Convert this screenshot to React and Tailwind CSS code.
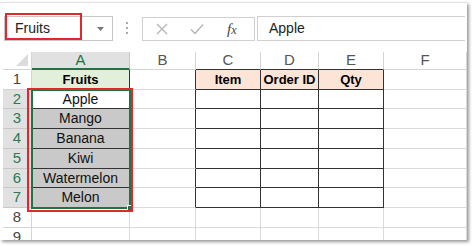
import React from "react";

const font = { fontFamily: '"Liberation Sans", Arial, sans-serif' };

const letters = ["", "A", "B", "C", "D", "E", "F"];
const fruits = ["Fruits", "Apple", "Mango", "Banana", "Kiwi", "Watermelon", "Melon"];
const tableHead = { 3: "Item", 4: "Order ID", 5: "Qty" };

// class list for one grid cell, r = 0 is the column header row, c = 0 is the row header column
const cellClass = (r, c) => {
  const base = "flex items-center justify-center border-r border-b overflow-hidden whitespace-nowrap";
  if (r === 0) {
    if (c === 0) return `${base} relative bg-white border-r-[#d4d4d4] border-b-[#d4d4d4]`;
    if (c === 1) return `${base} bg-[#e1e1e1] text-[#217346] border-r-[#c8c8c8] border-b-2 border-b-[#217346] text-[15px]`;
    if (c >= 3 && c <= 5) return `${base} bg-white text-[#555] border-r-[#d4d4d4] border-b-[#333] text-[15px]`;
    return `${base} bg-white text-[#555] border-r-[#d4d4d4] border-b-[#d4d4d4] text-[15px]`;
  }
  if (c === 0) {
    if (r >= 2 && r <= 7) return `${base} bg-[#e1e1e1] text-[#2d7a52] border-r-[#c8c8c8] border-b-[#c8c8c8] text-[15px]`;
    return `${base} bg-white text-[#444] border-r-[#d4d4d4] border-b-[#d4d4d4] text-[15px]`;
  }
  if (c === 1) {
    if (r === 1) return `${base} bg-[#e2efda] font-bold text-[13px] text-black border-r-[#333] border-b-[#333]`;
    if (r === 2) return `${base} bg-white text-[14px] text-[#111] border-r-[#333] border-b-[#333]`;
    if (r <= 7) return `${base} bg-[#c9c9c9] text-[14px] text-[#111] border-r-[#333] border-b-[#333]`;
    return `${base} bg-white border-r-[#dadada] border-b-[#dadada]`;
  }
  if (c === 2) {
    if (r <= 7) return `${base} bg-white border-r-[#333] border-b-[#dadada]`;
    return `${base} bg-white border-r-[#dadada] border-b-[#dadada]`;
  }
  if (c >= 3 && c <= 5 && r <= 7) {
    if (r === 1) return `${base} bg-[#fce4d6] font-bold text-[13px] text-black border-r-[#333] border-b-[#333]`;
    return `${base} bg-white border-r-[#333] border-b-[#333]`;
  }
  return `${base} bg-white border-r-[#dadada] border-b-[#dadada]`;
};

const cellText = (r, c) => {
  if (r === 0) return letters[c];
  if (c === 0) return r;
  if (c === 1 && r <= 7) return fruits[r - 1];
  if (r === 1 && tableHead[c]) return tableHead[c];
  return "";
};

const Corner = () => (
  <svg className="absolute right-[3px] bottom-[3px]" width="12" height="12" viewBox="0 0 12 12">
    <polygon points="12,0 12,12 0,12" fill="#dcdcdc" />
  </svg>
);

export default function App() {
  const rows = Array.from({ length: 10 }, (_, i) => i);
  const cols = Array.from({ length: 7 }, (_, i) => i);

  return (
    <div className="relative w-[474px] h-[246px] bg-white overflow-hidden pt-[2px]" style={font}>
      <div className="w-[467px] h-[238px] bg-white border-t border-[#e2e2e2] shadow-[2px_2px_3px_rgba(0,0,0,0.4)] flex flex-col overflow-hidden">
        {/* formula bar */}
        <div className="h-[49px] flex items-start pt-[13px] shrink-0">
          <div className="ml-[4px] w-[109px] h-[25px] border border-[#c6c6c6] flex items-center justify-between">
            <span className="pl-[10px] text-[14px] text-[#222]">Fruits</span>
            <svg className="mr-[8px]" width="7" height="4" viewBox="0 0 7 4">
              <polygon points="0,0 7,0 3.5,4" fill="#777" />
            </svg>
          </div>
          <div className="ml-[13px] mt-[6px] flex flex-col gap-[3px]">
            <span className="w-[2px] h-[2px] bg-[#aaa]" />
            <span className="w-[2px] h-[2px] bg-[#aaa]" />
            <span className="w-[2px] h-[2px] bg-[#aaa]" />
          </div>
          <div className="ml-[14px] mt-[1px] w-[113px] h-[24px] border border-[#d0d0d0] flex items-center">
            <svg className="ml-[13px]" width="12" height="12" viewBox="0 0 12 12">
              <path d="M1 1 L11 11 M11 1 L1 11" stroke="#b4b4b4" strokeWidth="1.3" />
            </svg>
            <svg className="ml-[22px]" width="14" height="12" viewBox="0 0 14 12">
              <path d="M1 6.5 L5 10.5 L13 1.5" stroke="#b4b4b4" strokeWidth="1.4" fill="none" />
            </svg>
            <span className="ml-[23px] text-[15px] italic text-[#444]" style={{ fontFamily: '"Liberation Serif", serif' }}>
              f<span className="text-[12px]">x</span>
            </span>
          </div>
          <div className="ml-[2px] w-[208px] h-[25px] border border-[#d0d0d0] border-r-0 flex items-center">
            <span className="pl-[11px] text-[14px] text-[#222]">Apple</span>
          </div>
        </div>

        {/* sheet grid */}
        <div className="ml-[3px] grid grid-cols-[29px_98px_66px_65px_58px_65px_1fr] grid-rows-[18px_20px_19px_20px_20px_20px_19px_20px_20px_20px]">
          {rows.map((r) =>
            cols.map((c) => (
              <div key={`${r}-${c}`} className={cellClass(r, c)}>
                {r === 0 && c === 0 ? <Corner /> : cellText(r, c)}
              </div>
            ))
          )}
        </div>
      </div>

      {/* selection of A2:A7 */}
      <div className="absolute left-[31px] top-[89px] w-[100px] h-[120px] border-2 border-[#217346]" />
      <div className="absolute left-[127px] top-[205px] w-[6px] h-[6px] bg-[#217346] border border-white" />

      {/* red highlight boxes */}
      <div className="absolute left-[27px] top-[88px] w-[106px] h-[124px] border-2 border-[#e0282e]" />
      <div className="absolute left-[5px] top-[13px] w-[77px] h-[27px] border-2 border-[#e0282e]" />
    </div>
  );
}
